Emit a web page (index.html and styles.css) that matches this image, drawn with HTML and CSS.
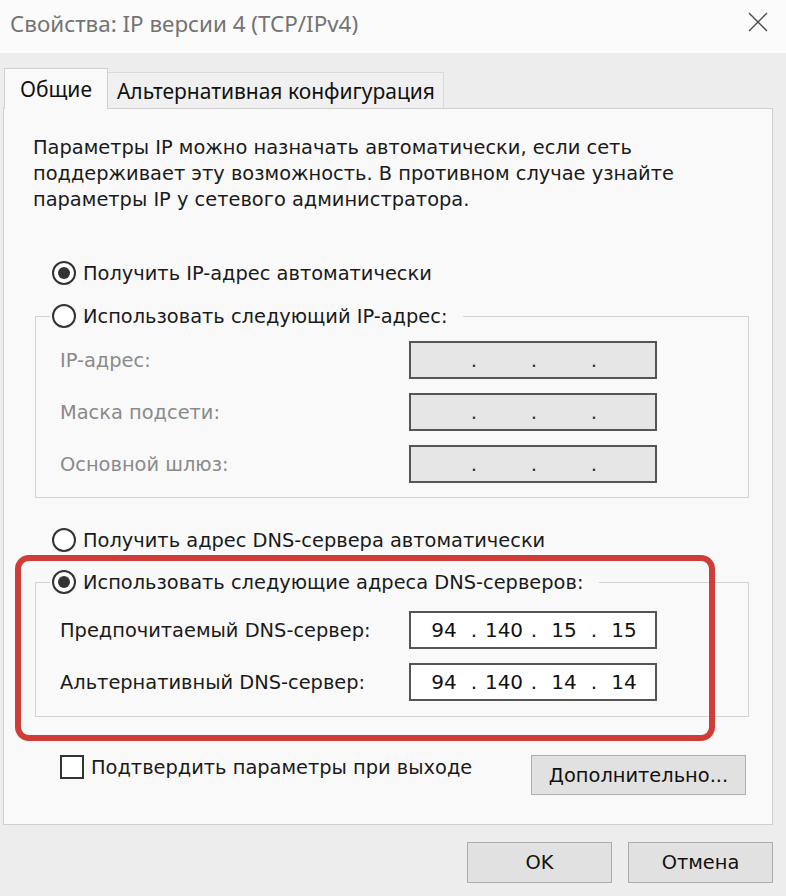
FILE: index.html
```html
<!DOCTYPE html>
<html>

<head>
  <meta charset="utf-8">
  <link rel="stylesheet" href="styles.css">
</head>

<body>
  <div class="titlebar">
    <span class="title">Свойства: IP версии 4 (TCP/IPv4)</span>
    <svg class="close" viewBox="0 0 20 20">
      <path d="M1 1 L19 19 M19 1 L1 19" />
    </svg>
  </div>

  <div class="content">
    <div class="tabs">
      <div class="tab active">Общие</div>
      <div class="tab">Альтернативная конфигурация</div>
    </div>

    <div class="panel">
      <p class="intro">Параметры IP можно назначать автоматически, если сеть<br>
        поддерживает эту возможность. В противном случае узнайте<br>
        параметры IP у сетевого администратора.</p>

      <div class="radio-row auto-ip"><span class="radio checked"></span>Получить IP-адрес автоматически</div>

      <fieldset class="group ip-group">
        <legend>
          <div class="radio-row"><span class="radio"></span>Использовать следующий IP-адрес:</div>
        </legend>
        <div class="field-grid">
          <span class="field-label disabled">IP-адрес:</span>
          <div class="ip-input disabled">
            <span class="octet"></span><span class="dot">.</span><span class="octet"></span><span class="dot">.</span><span class="octet"></span><span class="dot">.</span><span class="octet"></span>
          </div>
          <span class="field-label disabled">Маска подсети:</span>
          <div class="ip-input disabled">
            <span class="octet"></span><span class="dot">.</span><span class="octet"></span><span class="dot">.</span><span class="octet"></span><span class="dot">.</span><span class="octet"></span>
          </div>
          <span class="field-label disabled">Основной шлюз:</span>
          <div class="ip-input disabled">
            <span class="octet"></span><span class="dot">.</span><span class="octet"></span><span class="dot">.</span><span class="octet"></span><span class="dot">.</span><span class="octet"></span>
          </div>
        </div>
      </fieldset>

      <div class="radio-row dns-auto"><span class="radio"></span>Получить адрес DNS-сервера автоматически</div>

      <fieldset class="group dns-group">
        <legend>
          <div class="radio-row"><span class="radio checked"></span>Использовать следующие адреса DNS-серверов:</div>
        </legend>
        <div class="field-grid">
          <span class="field-label">Предпочитаемый DNS-сервер:</span>
          <div class="ip-input">
            <span class="octet">94</span><span class="dot">.</span><span class="octet">140</span><span class="dot">.</span><span class="octet">15</span><span class="dot">.</span><span class="octet">15</span>
          </div>
          <span class="field-label">Альтернативный DNS-сервер:</span>
          <div class="ip-input">
            <span class="octet">94</span><span class="dot">.</span><span class="octet">140</span><span class="dot">.</span><span class="octet">14</span><span class="dot">.</span><span class="octet">14</span>
          </div>
        </div>
      </fieldset>

      <div class="confirm-row">
        <div class="check-row"><span class="checkbox"></span>Подтвердить параметры при выходе</div>
        <button class="button advanced">Дополнительно...</button>
      </div>
    </div>

    <div class="footer">
      <button class="button">OK</button>
      <button class="button">Отмена</button>
    </div>
  </div>

  <!-- red annotation frame over the DNS block -->
  <div class="highlight"></div>
</body>

</html>
```

FILE: styles.css
```css
:root {
  --window-bg: #ededed;
  --titlebar-bg: #fbfbfb;
  --panel-bg: #f9f9f9;
  --tab-bg: #f0f0f0;
  --panel-border: #d0d0d0;
  --group-border: #d3d3d3;
  --text-color: #1a1a1a;
  --title-color: #737373;
  --disabled-text: #8a8a8a;
  --control-border: #333;
  --input-border: #555;
  --disabled-input: #e6e6e6;
  --button-bg: #e1e1e1;
  --button-border: #adadad;
  --highlight: #cf3d36;
}

* {
  box-sizing: border-box;
}

body {
  margin: 0;
  width: 786px;
  height: 896px;
  overflow: hidden;
  background-color: var(--window-bg);
  font-family: "DejaVu Sans", Verdana, sans-serif;
  font-size: 19.4px;
  color: var(--text-color);
}

/* Title bar */
.titlebar {
  height: 53px;
  background-color: var(--titlebar-bg);
  display: flex;
  align-items: center;
  justify-content: space-between;
  padding: 0 18px 0 10px;
}

.title {
  font-family: "Noto Sans", sans-serif;
  font-size: 22.4px;
  color: var(--title-color);
  margin-bottom: 6px;
}

.close {
  width: 20px;
  height: 20px;
  margin-bottom: 9px;
  stroke: #4a4a4a;
  stroke-width: 1.4;
  fill: none;
}

/* Tabs */
.content {
  padding-top: 15px;
}

.tabs {
  display: flex;
  align-items: flex-end;
  height: 40px;
  margin-left: 4px;
}

.tab {
  font-family: "Noto Sans", sans-serif;
  font-size: 21px;
  height: 36px;
  padding: 0 8px 0 9px;
  display: flex;
  align-items: center;
  background-color: var(--tab-bg);
  border: 1px solid #d9d9d9;
  border-bottom: none;
  color: #111;
}

.tab + .tab {
  border-left: none;
}

.tab.active {
  height: 41px;
  margin-bottom: -1px;
  padding: 0 15px;
  background-color: var(--panel-bg);
  border-color: var(--panel-border);
  position: relative;
  z-index: 1;
}

/* Tab page */
.panel {
  margin-left: 3px;
  width: 770px;
  height: 717px;
  background-color: var(--panel-bg);
  border: 1px solid var(--panel-border);
  padding: 26px 0 0 29px;
}

.intro {
  margin: 0;
  line-height: 26px;
}

.radio-row {
  display: flex;
  align-items: center;
  gap: 7px;
  height: 26px;
  white-space: nowrap;
}

.auto-ip,
.dns-auto {
  margin-left: 19px;
}

.auto-ip {
  margin-top: 47px;
}

.dns-auto {
  margin-top: 29px;
}

.radio {
  width: 24px;
  height: 24px;
  border: 2px solid var(--control-border);
  border-radius: 50%;
  background-color: #fff;
  display: flex;
  align-items: center;
  justify-content: center;
  flex-shrink: 0;
}

.radio.checked::after {
  content: "";
  width: 12px;
  height: 12px;
  border-radius: 50%;
  background-color: var(--control-border);
}

/* Group boxes */
.group {
  margin: 17px 0 0 2px;
  width: 714px;
  min-width: 0;
  border: 1px solid var(--group-border);
  padding: 12px 0 14px 0;
}

.group legend {
  margin-left: 14px;
  padding: 0 16px 0 2px;
}

.dns-group {
  margin-top: 16px;
  padding-top: 16px;
  padding-bottom: 15px;
}

.field-grid {
  display: grid;
  grid-template-columns: 349px 248px;
  row-gap: 14px;
  align-items: center;
  padding-left: 24px;
}

.field-label.disabled {
  color: var(--disabled-text);
}

.ip-input {
  height: 38px;
  display: flex;
  align-items: center;
  padding-left: 8px;
  border: 2px solid var(--input-border);
  background-color: #fff;
  font-size: 20px;
  color: #111;
}

.ip-input.disabled {
  background-color: var(--disabled-input);
  color: #333;
}

.octet {
  width: 50px;
  text-align: center;
}

.dot {
  width: 10px;
  text-align: center;
}

/* Bottom of the page */
.confirm-row {
  display: flex;
  align-items: flex-start;
  margin-top: 38px;
  padding: 0 26px 0 27px;
}

.check-row {
  display: flex;
  align-items: center;
  gap: 7px;
  height: 24px;
}

.checkbox {
  width: 24px;
  height: 24px;
  border: 2px solid var(--control-border);
  background-color: #fff;
}

.button {
  font-family: inherit;
  font-size: 19.4px;
  color: #111;
  background-color: var(--button-bg);
  border: 1px solid var(--button-border);
  padding: 0;
}

.advanced {
  margin-left: auto;
  width: 215px;
  height: 40px;
}

.footer {
  display: flex;
  justify-content: flex-end;
  gap: 16px;
  padding: 17px 13px 0 0;
}

.footer .button {
  width: 145px;
  height: 41px;
}

.highlight {
  position: absolute;
  left: 15px;
  top: 555px;
  width: 700px;
  height: 186px;
  border: 6px solid var(--highlight);
  border-radius: 14px;
  pointer-events: none;
}
```
